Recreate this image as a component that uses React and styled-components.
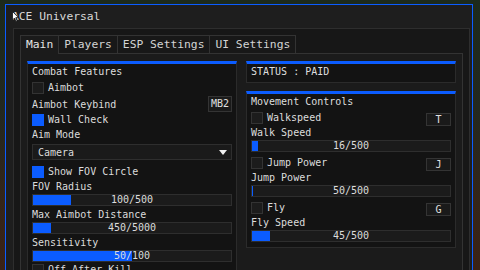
import React from "react";
import styled, { createGlobalStyle } from "styled-components";

const blue = "#0b5cff";

const GlobalStyle = createGlobalStyle`
  html, body {
    margin: 0;
    padding: 0;
  }
  body {
    width: 480px;
    height: 270px;
    overflow: hidden;
    font-family: "DejaVu Sans Mono", "Liberation Mono", monospace;
    color: #dcdcdc;
    background: linear-gradient(180deg, #1d2a1c 0%, #232820 40%, #352519 75%, #3b2216 100%);
  }
`;

const Scene = styled.div`
  height: 270px;
  padding: 4px 0 0 5px;
  box-sizing: border-box;
`;

const Window = styled.div`
  position: relative;
  width: 468px;
  height: 300px;
  box-sizing: border-box;
  border: 1px solid ${blue};
  background: #1e1e1e;
  display: flex;
  flex-direction: column;
`;

const TitleBar = styled.div`
  height: 23px;
  padding-left: 6px;
  display: flex;
  align-items: center;
  font-size: 11.3px;
  color: #d8d8d8;
`;

const Cursor = styled.svg`
  position: absolute;
  left: 6px;
  top: 6px;
`;

const Inner = styled.div`
  flex: 1;
  margin: 0 2px 0 7px;
  border: 1px solid #2e2e2e;
  background: #171717;
  padding: 6px 6px 0 6px;
  display: flex;
  flex-direction: column;
`;

const TabBar = styled.div`
  display: flex;
  height: 18px;
`;

const Tab = styled.div`
  position: relative;
  z-index: ${(p) => (p.$active ? 2 : 1)};
  height: ${(p) => (p.$active ? "19px" : "18px")};
  box-sizing: border-box;
  padding: 0 5px;
  margin-right: -1px;
  border: 1px solid #333;
  border-bottom: none;
  background: ${(p) => (p.$active ? "#1b1b1b" : "#181818")};
  font-size: 11.3px;
  line-height: 17px;
  color: ${(p) => (p.$active ? "#e4e4e4" : "#d4d4d4")};
`;

const Panel = styled.div`
  flex: 1;
  border: 1px solid #333;
  background: #1b1b1b;
  padding: 7px 6px;
  display: grid;
  grid-template-columns: 1fr 1fr;
  column-gap: 9px;
  align-items: start;
`;

const Column = styled.div`
  display: flex;
  flex-direction: column;
  gap: 8px;
`;

const Group = styled.div`
  background: #131313;
  border: 1px solid #2b2b2b;
  border-top: 3px solid ${blue};
  padding: 0 4px ${(p) => p.$pb || 0}px 4px;
`;

const GroupTitle = styled.div`
  height: 16px;
  line-height: 16px;
  font-size: 10px;
  color: #dedede;
`;

const Stack = styled.div`
  display: flex;
  flex-direction: column;
  gap: ${(p) => p.$gap}px;
  padding-top: 2px;
`;

const Block = styled.div`
  display: flex;
  flex-direction: column;
`;

const CheckRow = styled.div`
  display: flex;
  align-items: flex-start;
  gap: 4px;
  height: ${(p) => p.$h || 12}px;
  font-size: 10px;
  line-height: 12px;
`;

const Box = styled.div`
  width: 12px;
  height: 12px;
  box-sizing: border-box;
  flex-shrink: 0;
  border: 1px solid ${(p) => (p.$on ? blue : "#333")};
  background: ${(p) => (p.$on ? blue : "#1c1c1c")};
`;

const KeyBox = styled.div`
  margin-left: auto;
  margin-top: ${(p) => p.$mt || 0}px;
  width: ${(p) => p.$w}px;
  height: ${(p) => p.$h}px;
  box-sizing: border-box;
  border: 1px solid #343434;
  background: #1a1a1a;
  font-size: 10px;
  line-height: ${(p) => p.$h - 2}px;
  text-align: center;
  color: #e0e0e0;
`;

const KeyRow = styled.div`
  display: flex;
  align-items: center;
  height: 16px;
  font-size: 10px;
`;

const Label = styled.div`
  height: 14px;
  line-height: 14px;
  font-size: 10px;
`;

const Dropdown = styled.div`
  margin: 2px 0 4px;
  height: 16px;
  box-sizing: border-box;
  border: 1px solid #2e2e2e;
  background: #1a1a1a;
  display: flex;
  align-items: center;
  justify-content: space-between;
  padding: 0 4px 0 5px;
  font-size: 10px;
`;

const Track = styled.div`
  position: relative;
  height: 12px;
  box-sizing: border-box;
  border: 1px solid #2e2e2e;
  background: #1b1b1b;
  font-size: 10px;
  line-height: 10px;
  text-align: center;
  color: #dcdcdc;
`;

const Fill = styled.div`
  position: absolute;
  left: 0;
  top: 0;
  bottom: 0;
  background: ${blue};
`;

const TrackText = styled.span`
  position: relative;
`;

function Check({ on, children, h, keyName }) {
  return (
    <CheckRow $h={h}>
      <Box $on={on} />
      <span>{children}</span>
      {keyName && (
        <KeyBox $w={25} $h={13} $mt={1}>
          {keyName}
        </KeyBox>
      )}
    </CheckRow>
  );
}

function Slider({ label, value, max, pct }) {
  return (
    <Block>
      <Label>{label}</Label>
      <Track>
        <Fill style={{ width: `${pct}%` }} />
        <TrackText>
          {value}/{max}
        </TrackText>
      </Track>
    </Block>
  );
}

function Feature({ name, keyName, label, value, max, pct }) {
  return (
    <Block>
      <Check h={14} keyName={keyName}>
        {name}
      </Check>
      <Slider label={label} value={value} max={max} pct={pct} />
    </Block>
  );
}

export default function App() {
  return (
    <>
      <GlobalStyle />
      <Scene>
        <Window>
          <TitleBar>ACE Universal</TitleBar>
          <Cursor width="7" height="11" viewBox="0 0 7 11">
            <path d="M0.5 0.5 L0.5 9 L2.5 7 L4 10.5 L5.2 10 L3.8 6.6 L6.5 6.6 Z" fill="#fff" stroke="#111" strokeWidth="0.8" />
          </Cursor>
          <Inner>
            <TabBar>
              <Tab $active>Main</Tab>
              <Tab>Players</Tab>
              <Tab>ESP Settings</Tab>
              <Tab>UI Settings</Tab>
            </TabBar>
            <Panel>
              <Column>
                <Group>
                  <GroupTitle>Combat Features</GroupTitle>
                  <Stack $gap={2}>
                    <Check>Aimbot</Check>
                    <KeyRow>
                      <span>Aimbot Keybind</span>
                      <KeyBox $w={24} $h={16}>MB2</KeyBox>
                    </KeyRow>
                    <Check on>Wall Check</Check>
                    <Block>
                      <Label>Aim Mode</Label>
                      <Dropdown>
                        <span>Camera</span>
                        <svg width="8" height="5" viewBox="0 0 8 5">
                          <path d="M0 0 H8 L4 5 Z" fill="#f0f0f0" />
                        </svg>
                      </Dropdown>
                    </Block>
                    <Check on>Show FOV Circle</Check>
                    <Slider label="FOV Radius" value={100} max={500} pct={19} />
                    <Slider label="Max Aimbot Distance" value={450} max={5000} pct={9} />
                    <Slider label="Sensitivity" value={50} max={100} pct={50} />
                    <Check>Off After Kill</Check>
                  </Stack>
                </Group>
              </Column>
              <Column>
                <Group $pb={2}>
                  <GroupTitle>STATUS : PAID</GroupTitle>
                </Group>
                <Group $pb={5}>
                  <GroupTitle>Movement Controls</GroupTitle>
                  <Stack $gap={5}>
                    <Feature name="Walkspeed" keyName="T" label="Walk Speed" value={16} max={500} pct={3.2} />
                    <Feature name="Jump Power" keyName="J" label="Jump Power" value={50} max={500} pct={0.6} />
                    <Feature name="Fly" keyName="G" label="Fly Speed" value={45} max={500} pct={9} />
                  </Stack>
                </Group>
              </Column>
            </Panel>
          </Inner>
        </Window>
      </Scene>
    </>
  );
}
